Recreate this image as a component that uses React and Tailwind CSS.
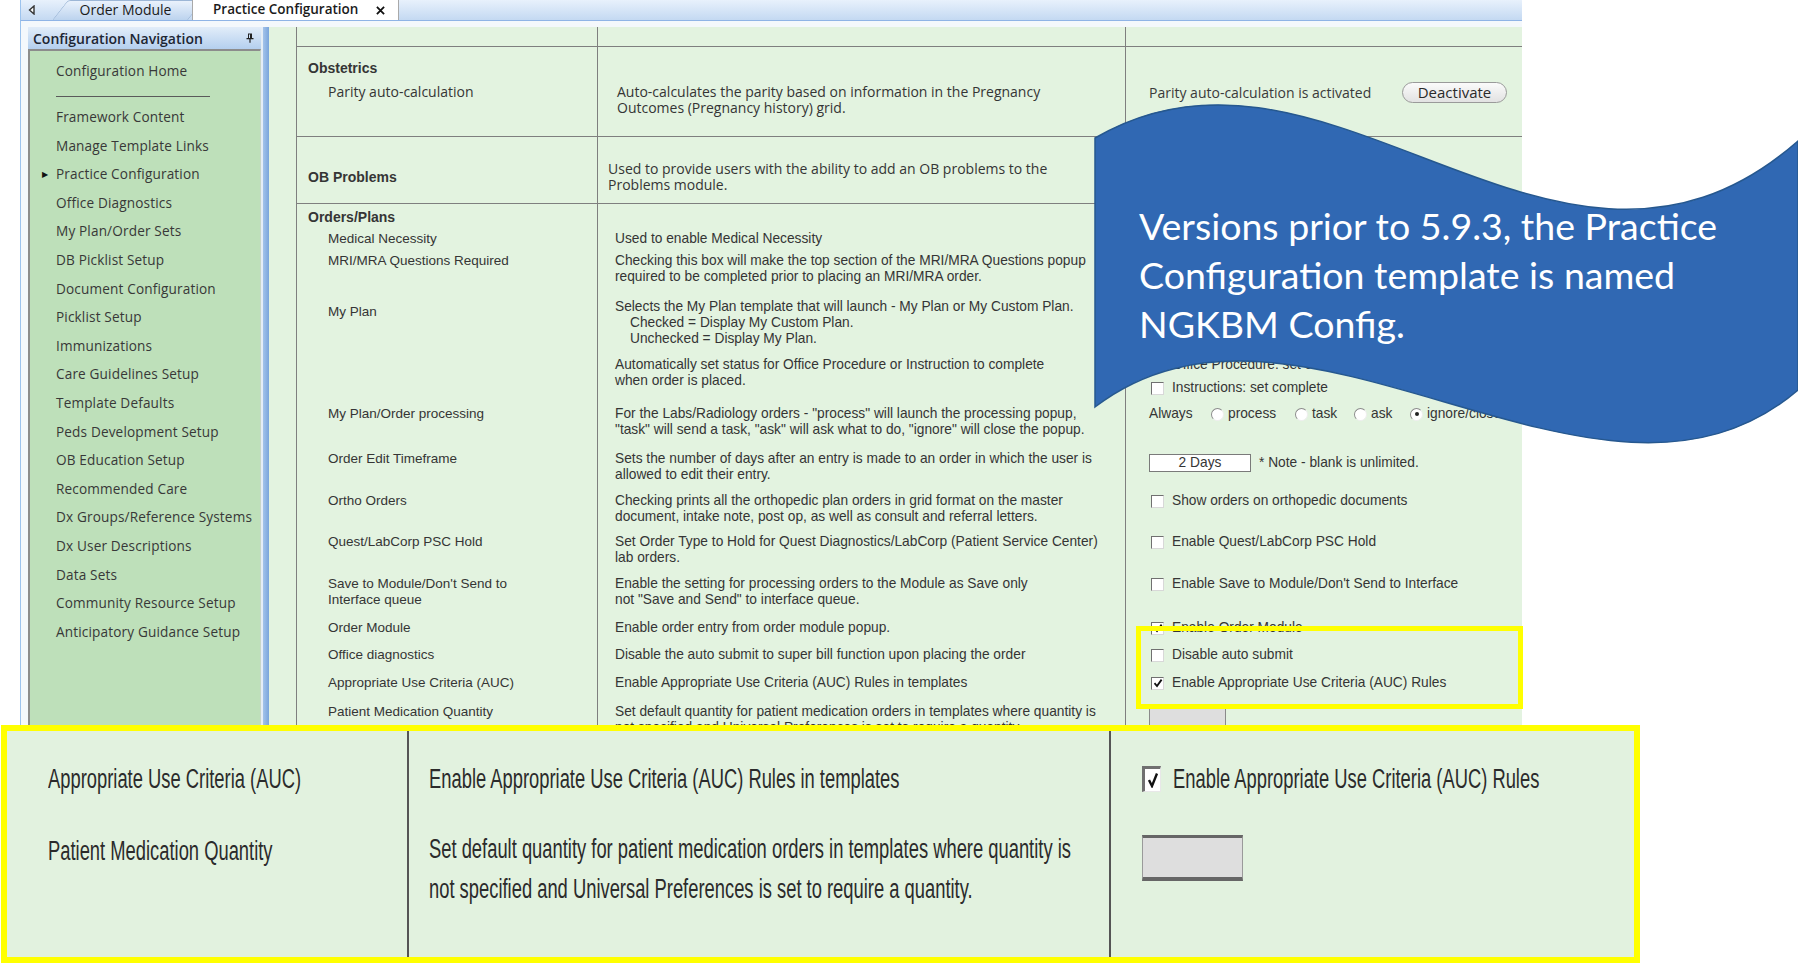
import React from "react";
import clsx from "clsx";

const navItems = [
  "Framework Content",
  "Manage Template Links",
  "Practice Configuration",
  "Office Diagnostics",
  "My Plan/Order Sets",
  "DB Picklist Setup",
  "Document Configuration",
  "Picklist Setup",
  "Immunizations",
  "Care Guidelines Setup",
  "Template Defaults",
  "Peds Development Setup",
  "OB Education Setup",
  "Recommended Care",
  "Dx Groups/Reference Systems",
  "Dx User Descriptions",
  "Data Sets",
  "Community Resource Setup",
  "Anticipatory Guidance Setup",
];

const Checkbox = ({ checked }) => (
  <span className="flex h-[13px] w-[13px] shrink-0 items-center justify-center border border-t-[#707070] border-l-[#707070] border-b-[#d8d8d8] border-r-[#d8d8d8] bg-white">
    {checked && (
      <svg viewBox="0 0 10 10" className="h-[10px] w-[10px]">
        <path d="M1.5 5.2 L4 8 L8.6 1.6" fill="none" stroke="#111" strokeWidth="1.8" />
      </svg>
    )}
  </span>
);

const CheckRow = ({ checked, children, className }) => (
  <div className={clsx("flex h-4 items-center gap-2 whitespace-nowrap", className)}>
    <Checkbox checked={checked} />
    <span>{children}</span>
  </div>
);

const Radio = ({ on }) => (
  <span className="flex h-[13px] w-[13px] shrink-0 items-center justify-center rounded-full border border-t-[#8a8a8a] border-l-[#8a8a8a] border-b-[#eeeeee] border-r-[#eeeeee] bg-white">
    {on && <span className="h-[4px] w-[4px] rounded-full bg-[#222]" />}
  </span>
);

const TableRow = ({ h, left, mid, right, bordered }) => (
  <div className={clsx("grid shrink-0 grid-cols-[301px_528px_1fr]", h, bordered && "border-b border-[#7f7f7f]")}>
    <div className="border-r border-[#7f7f7f]">{left}</div>
    <div className="border-r border-[#7f7f7f]">{mid}</div>
    <div>{right}</div>
  </div>
);

const Label = ({ children, className }) => (
  <div className={clsx("whitespace-nowrap pl-[31px] text-[13.5px] leading-4", className)}>{children}</div>
);

const Desc = ({ lines }) => (
  <div className="whitespace-nowrap pl-[17px] leading-4">
    {lines.map((l, i) => (
      <div key={i} className={clsx(l.startsWith("  ") && "pl-[15px]")}>
        {l.trim()}
      </div>
    ))}
  </div>
);

// the enlarged screenshot text is squeezed horizontally
const Squeeze = ({ children, className }) => (
  <div className={clsx("origin-left scale-x-[0.68] whitespace-nowrap", className)}>{children}</div>
);

export default function App() {
  return (
    <div className="relative h-[966px] w-[1798px] overflow-hidden bg-white">
      {/* application screenshot */}
      <div className="flex h-[725px] w-[1522px] flex-col overflow-hidden">
        {/* tab strip */}
        <div className="ml-[20px] flex h-[21px] shrink-0 items-end border-b border-l border-[#8fb4e6] border-l-[#9cc3ee] bg-gradient-to-b from-[#e8f1fc] to-[#c4d9f2] font-['Open_Sans',sans-serif] text-[#1b1b1b]">
          <svg viewBox="0 0 7 10" className="mb-[5px] ml-[7px] h-[10px] w-[7px]">
            <path d="M6 1 L1.5 5 L6 9 Z" fill="#fff" stroke="#333" strokeWidth="1.4" />
          </svg>
          <div className="relative ml-[15px] flex h-[20px] w-[142px] items-center justify-center pl-[9px] text-[14px]">
            <div className="absolute inset-y-0 left-[10px] right-[-4px] -skew-x-[38deg] rounded-t-[3px] border border-b-0 border-[#9cb6d6] bg-gradient-to-b from-[#eaf2fc] to-[#bcd3ee]" />
            <span className="relative leading-none">Order Module</span>
          </div>
          <div className="relative flex h-[21px] w-[207px] items-center gap-[18px] border border-b-0 border-[#a9a9a9] bg-white pl-[20px] text-[13.5px] font-semibold">
            <span className="leading-none">Practice Configuration</span>
            <svg viewBox="0 0 10 10" className="h-[9px] w-[9px]">
              <path d="M1 1 L9 9 M9 1 L1 9" stroke="#111" strokeWidth="2" />
            </svg>
          </div>
        </div>

        {/* body */}
        <div className="flex min-h-0 flex-1">
          <div className="w-[20px] shrink-0 bg-white" />
          <div className="flex flex-1 border-l border-[#9cc3ee] bg-[#f4f8fc] pl-[7px] pt-[6px]">
            {/* navigation panel */}
            <div className="flex w-[233px] shrink-0 flex-col font-['Open_Sans',sans-serif]">
              <div className="flex h-[22px] shrink-0 items-center justify-between bg-gradient-to-b from-[#e2edf9] to-[#b4cfee] pl-[5px] pr-[7px] text-[14px] font-semibold text-[#1d2633]">
                <span>Configuration Navigation</span>
                <svg viewBox="0 0 8 10" className="h-[10px] w-[8px]">
                  <path d="M2 0.5 H6 V5 H7.5 V6.3 H4.6 V9.8 H3.4 V6.3 H0.5 V5 H2 Z M3 1.5 V5 H4 V1.5 Z" fill="#222" fillRule="evenodd" />
                </svg>
              </div>
              <div className="flex-1 border-l-2 border-t-2 border-r border-[#8c8c8c] border-r-[#c9d6c6] bg-[#bee0ba] pl-[26px] pt-[6px] text-[13.6px] tracking-[0.15px] text-[#383838]">
                <div className="flex h-[28.6px] items-center">Configuration Home</div>
                <div className="h-[17.4px] pt-[10px]">
                  <div className="h-px w-[154px] bg-[#5a5a5a]" />
                </div>
                {navItems.map((item) => (
                  <div key={item} className="flex h-[28.6px] items-center whitespace-nowrap">
                    {item === "Practice Configuration" && (
                      <span className="-ml-[14px] w-[14px] text-[8px] text-[#111]">▶</span>
                    )}
                    <span>{item}</span>
                  </div>
                ))}
              </div>
            </div>

            {/* splitter */}
            <div className="flex w-[8px] shrink-0">
              <div className="w-[2px] bg-[#e4edf7]" />
              <div className="flex-1 bg-gradient-to-r from-[#a3c3ea] to-[#7aa5dc]" />
            </div>

            {/* main content */}
            <div className="flex flex-1 bg-[#e3f3e0] text-[#353535]">
              <div className="w-[27px] shrink-0" />
              <div className="flex flex-1 flex-col border-l border-[#7f7f7f]">
                <TableRow h="h-[20px]" bordered />

                {/* Obstetrics */}
                <TableRow
                  h="h-[90px]"
                  bordered
                  left={
                    <div className="pt-[13px]">
                      <div className="pl-[11px] font-['Liberation_Sans',Arial,sans-serif] text-[14px] font-bold leading-4">Obstetrics</div>
                      <div className="mt-[8px] pl-[31px] font-['Open_Sans',sans-serif] text-[14px] leading-4">Parity auto-calculation</div>
                    </div>
                  }
                  mid={
                    <div className="whitespace-nowrap pl-[19px] pt-[37px] font-['Open_Sans',sans-serif] text-[14px] leading-4">
                      <div>Auto-calculates the parity based on information in the Pregnancy</div>
                      <div>Outcomes (Pregnancy history) grid.</div>
                    </div>
                  }
                  right={
                    <div className="flex items-center pl-[23px] pt-[35px] font-['Open_Sans',sans-serif]">
                      <span className="w-[253px] whitespace-nowrap text-[14px] text-[#3a3a3a]">Parity auto-calculation is activated</span>
                      <span className="flex h-[21px] w-[105px] items-center justify-center rounded-full border border-[#9a9a9a] bg-gradient-to-b from-[#fbfbfb] to-[#e2e2e2] text-[15px] text-[#2a2a2a]">
                        Deactivate
                      </span>
                    </div>
                  }
                />

                {/* OB problems */}
                <TableRow
                  h="h-[67px]"
                  bordered
                  left={
                    <div className="pl-[11px] pt-[32px] font-['Liberation_Sans',Arial,sans-serif] text-[14px] font-bold leading-4">OB Problems</div>
                  }
                  mid={
                    <div className="whitespace-nowrap pl-[10px] pt-[24px] font-['Open_Sans',sans-serif] text-[14px] leading-[16px]">
                      <div>Used to provide users with the ability to add an OB problems to the</div>
                      <div>Problems module.</div>
                    </div>
                  }
                />

                {/* Orders / Plans */}
                <div className="flex flex-col font-['Liberation_Sans',Arial,sans-serif] text-[13.75px]">
                  <TableRow
                    h="h-[27px]"
                    left={<div className="pl-[11px] pt-[5px] text-[14px] font-bold leading-4">Orders/Plans</div>}
                  />
                  <TableRow
                    h="h-[22px]"
                    left={<Label>Medical Necessity</Label>}
                    mid={<Desc lines={["Used to enable Medical Necessity"]} />}
                  />
                  <TableRow
                    h="h-[46px]"
                    left={<Label>MRI/MRA Questions Required</Label>}
                    mid={
                      <Desc
                        lines={[
                          "Checking this box will make the top section of the MRI/MRA Questions popup",
                          "required to be completed prior to placing an MRI/MRA order.",
                        ]}
                      />
                    }
                  />
                  <TableRow
                    h="h-[58px]"
                    left={<Label className="pt-[5px]">My Plan</Label>}
                    mid={
                      <Desc
                        lines={[
                          "Selects the My Plan template that will launch - My Plan or My Custom Plan.",
                          "  Checked = Display My Custom Plan.",
                          "  Unchecked = Display My Plan.",
                        ]}
                      />
                    }
                  />
                  <TableRow
                    h="h-[49px]"
                    mid={
                      <Desc
                        lines={[
                          "Automatically set status for Office Procedure or Instruction to complete",
                          "when order is placed.",
                        ]}
                      />
                    }
                    right={
                      <div className="pl-[25px]">
                        <CheckRow>Office Procedure: set complete</CheckRow>
                        <CheckRow className="mt-[7px]">Instructions: set complete</CheckRow>
                      </div>
                    }
                  />
                  <TableRow
                    h="h-[45px]"
                    left={<Label>My Plan/Order processing</Label>}
                    mid={
                      <Desc
                        lines={[
                          'For the Labs/Radiology orders - "process" will launch the processing popup,',
                          '"task" will send a task, "ask" will ask what to do, "ignore" will close the popup.',
                        ]}
                      />
                    }
                    right={
                      <div className="flex h-4 items-center whitespace-nowrap pl-[23px]">
                        <span className="w-[62px]">Always</span>
                        <span className="flex w-[84px] items-center gap-[4px]"><Radio />process</span>
                        <span className="flex w-[59px] items-center gap-[4px]"><Radio />task</span>
                        <span className="flex w-[56px] items-center gap-[4px]"><Radio />ask</span>
                        <span className="flex items-center gap-[4px]"><Radio on />ignore/close</span>
                      </div>
                    }
                  />
                  <TableRow
                    h="h-[42px]"
                    left={<Label>Order Edit Timeframe</Label>}
                    mid={
                      <Desc
                        lines={[
                          "Sets the number of days after an entry is made to an order in which the user is",
                          "allowed to edit their entry.",
                        ]}
                      />
                    }
                    right={
                      <div className="flex items-center gap-[8px] whitespace-nowrap pl-[23px] pt-[2px]">
                        <span className="flex h-[18px] w-[102px] items-center justify-center border border-[#7a7a7a] bg-white">2 Days</span>
                        <span>* Note - blank is unlimited.</span>
                      </div>
                    }
                  />
                  <TableRow
                    h="h-[41px]"
                    left={<Label>Ortho Orders</Label>}
                    mid={
                      <Desc
                        lines={[
                          "Checking prints all the orthopedic plan orders in grid format on the master",
                          "document, intake note, post op, as well as consult and referral letters.",
                        ]}
                      />
                    }
                    right={<CheckRow className="pl-[25px]">Show orders on orthopedic documents</CheckRow>}
                  />
                  <TableRow
                    h="h-[42px]"
                    left={<Label>Quest/LabCorp PSC Hold</Label>}
                    mid={
                      <Desc
                        lines={[
                          "Set Order Type to Hold for Quest Diagnostics/LabCorp (Patient Service Center)",
                          "lab orders.",
                        ]}
                      />
                    }
                    right={<CheckRow className="pl-[25px]">Enable Quest/LabCorp PSC Hold</CheckRow>}
                  />
                  <TableRow
                    h="h-[44px]"
                    left={
                      <Label>
                        <div>Save to Module/Don't Send to</div>
                        <div>Interface queue</div>
                      </Label>
                    }
                    mid={
                      <Desc
                        lines={[
                          "Enable the setting for processing orders to the Module as Save only",
                          'not "Save and Send" to interface queue.',
                        ]}
                      />
                    }
                    right={<CheckRow className="pl-[25px]">Enable Save to Module/Don't Send to Interface</CheckRow>}
                  />
                  <TableRow
                    h="h-[27px]"
                    left={<Label>Order Module</Label>}
                    mid={<Desc lines={["Enable order entry from order module popup."]} />}
                    right={<CheckRow checked className="pl-[25px]">Enable Order Module</CheckRow>}
                  />
                  <TableRow
                    h="h-[28px]"
                    left={<Label>Office diagnostics</Label>}
                    mid={<Desc lines={["Disable the auto submit to super bill function upon placing the order"]} />}
                    right={<CheckRow className="pl-[25px]">Disable auto submit</CheckRow>}
                  />
                  <TableRow
                    h="h-[29px]"
                    left={<Label>Appropriate Use Criteria (AUC)</Label>}
                    mid={<Desc lines={["Enable Appropriate Use Criteria (AUC) Rules in templates"]} />}
                    right={<CheckRow checked className="pl-[25px]">Enable Appropriate Use Criteria (AUC) Rules</CheckRow>}
                  />
                  <TableRow
                    h="h-[40px]"
                    left={<Label>Patient Medication Quantity</Label>}
                    mid={
                      <Desc
                        lines={[
                          "Set default quantity for patient medication orders in templates where quantity is",
                          "not specified and Universal Preferences is set to require a quantity.",
                        ]}
                      />
                    }
                    right={
                      <div className="pl-[23px]">
                        <div className="h-[24px] w-[77px] border border-t-2 border-[#8a8a8a] border-t-[#6a6a6a] bg-[#dedede]" />
                      </div>
                    }
                  />
                </div>
              </div>
            </div>
          </div>
        </div>
      </div>

      {/* enlarged call-out */}
      <div className="ml-[1px] flex h-[238px] w-[1639px] border-[6px] border-[#ffff00] bg-[#e2f2df] font-['Liberation_Sans',Arial,sans-serif] text-[27px] text-[#2b2b2b]">
        <div className="w-[402px] shrink-0 border-r-2 border-[#555] pl-[41px] pt-[33px]">
          <Squeeze className="leading-[30px]">Appropriate Use Criteria (AUC)</Squeeze>
          <Squeeze className="mt-[42px] leading-[30px]">Patient Medication Quantity</Squeeze>
        </div>
        <div className="w-[702px] shrink-0 border-r-2 border-[#555] pl-[20px] pt-[33px]">
          <Squeeze className="leading-[30px]">Enable Appropriate Use Criteria (AUC) Rules in templates</Squeeze>
          <Squeeze className="mt-[35px] leading-[40px]">
            <div>Set default quantity for patient medication orders in templates where quantity is</div>
            <div>not specified and Universal Preferences is set to require a quantity.</div>
          </Squeeze>
        </div>
        <div className="flex-1 pl-[31px] pt-[33px]">
          <div className="flex h-[30px] items-center gap-[12px]">
            <span className="flex h-[26px] w-[19px] shrink-0 items-center justify-center border-l-[3px] border-t-[3px] border-r border-b border-[#707070] border-r-[#e8e8e8] border-b-[#e8e8e8] bg-white">
              <svg viewBox="0 0 10 16" className="h-[16px] w-[10px]">
                <path d="M1 8 L4 14 L9 1.5" fill="none" stroke="#111" strokeWidth="2.4" />
              </svg>
            </span>
            <Squeeze>Enable Appropriate Use Criteria (AUC) Rules</Squeeze>
          </div>
          <div className="mt-[41px] h-[46px] w-[101px] border border-b-4 border-t-[3px] border-[#9a9a9a] border-b-[#666] border-t-[#666] bg-[#dedede]" />
        </div>
      </div>

      {/* highlight around the AUC controls */}
      <div className="absolute left-[1136px] top-[626px] h-[83px] w-[387px] border-[5px] border-[#ffff00]" />

      {/* blue banner */}
      <svg className="pointer-events-none absolute left-0 top-0" width="1798" height="966" viewBox="0 0 1798 966">
        <path
          d="M1095 138 C1330 0 1560 350 1798 141 L1798 390 C1600 560 1300 250 1095 407 Z"
          fill="#3068b3"
          stroke="#26588f"
          strokeWidth="1.5"
        />
      </svg>
      <div className="absolute left-[1139px] top-[201px] font-['Lato',sans-serif] text-[37.5px] leading-[49px] text-white">
        <div>Versions prior to 5.9.3, the Practice</div>
        <div>Configuration template is named</div>
        <div>NGKBM Config.</div>
      </div>
    </div>
  );
}
